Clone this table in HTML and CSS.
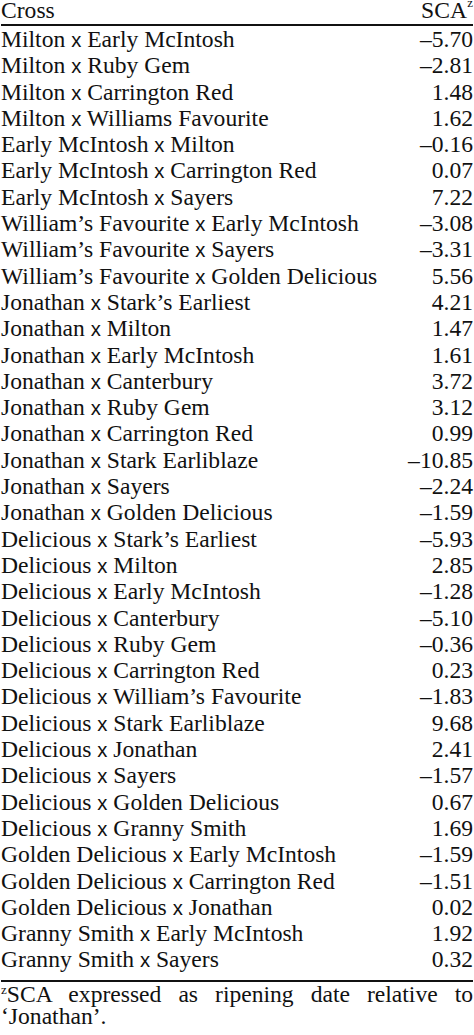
FILE: index.html
```html
<!DOCTYPE html>
<html>
<head>
<meta charset="utf-8">
<link rel="stylesheet" href="styles.css">
</head>
<body>
<div class="page">
  <div class="head">
    <span class="cross">Cross</span>
    <span class="sca">SCA<sup class="z">z</sup></span>
  </div>
  <div class="rows">
    <div class="row"><span>Milton <span class="x">x</span> Early McIntosh</span><span>–5.70</span></div>
    <div class="row"><span>Milton <span class="x">x</span> Ruby Gem</span><span>–2.81</span></div>
    <div class="row"><span>Milton <span class="x">x</span> Carrington Red</span><span>1.48</span></div>
    <div class="row"><span>Milton <span class="x">x</span> Williams Favourite</span><span>1.62</span></div>
    <div class="row"><span>Early McIntosh <span class="x">x</span> Milton</span><span>–0.16</span></div>
    <div class="row"><span>Early McIntosh <span class="x">x</span> Carrington Red</span><span>0.07</span></div>
    <div class="row"><span>Early McIntosh <span class="x">x</span> Sayers</span><span>7.22</span></div>
    <div class="row"><span>William’s Favourite <span class="x">x</span> Early McIntosh</span><span>–3.08</span></div>
    <div class="row"><span>William’s Favourite <span class="x">x</span> Sayers</span><span>–3.31</span></div>
    <div class="row"><span>William’s Favourite <span class="x">x</span> Golden Delicious</span><span>5.56</span></div>
    <div class="row"><span>Jonathan <span class="x">x</span> Stark’s Earliest</span><span>4.21</span></div>
    <div class="row"><span>Jonathan <span class="x">x</span> Milton</span><span>1.47</span></div>
    <div class="row"><span>Jonathan <span class="x">x</span> Early McIntosh</span><span>1.61</span></div>
    <div class="row"><span>Jonathan <span class="x">x</span> Canterbury</span><span>3.72</span></div>
    <div class="row"><span>Jonathan <span class="x">x</span> Ruby Gem</span><span>3.12</span></div>
    <div class="row"><span>Jonathan <span class="x">x</span> Carrington Red</span><span>0.99</span></div>
    <div class="row"><span>Jonathan <span class="x">x</span> Stark Earliblaze</span><span>–10.85</span></div>
    <div class="row"><span>Jonathan <span class="x">x</span> Sayers</span><span>–2.24</span></div>
    <div class="row"><span>Jonathan <span class="x">x</span> Golden Delicious</span><span>–1.59</span></div>
    <div class="row"><span>Delicious <span class="x">x</span> Stark’s Earliest</span><span>–5.93</span></div>
    <div class="row"><span>Delicious <span class="x">x</span> Milton</span><span>2.85</span></div>
    <div class="row"><span>Delicious <span class="x">x</span> Early McIntosh</span><span>–1.28</span></div>
    <div class="row"><span>Delicious <span class="x">x</span> Canterbury</span><span>–5.10</span></div>
    <div class="row"><span>Delicious <span class="x">x</span> Ruby Gem</span><span>–0.36</span></div>
    <div class="row"><span>Delicious <span class="x">x</span> Carrington Red</span><span>0.23</span></div>
    <div class="row"><span>Delicious <span class="x">x</span> William’s Favourite</span><span>–1.83</span></div>
    <div class="row"><span>Delicious <span class="x">x</span> Stark Earliblaze</span><span>9.68</span></div>
    <div class="row"><span>Delicious <span class="x">x</span> Jonathan</span><span>2.41</span></div>
    <div class="row"><span>Delicious <span class="x">x</span> Sayers</span><span>–1.57</span></div>
    <div class="row"><span>Delicious <span class="x">x</span> Golden Delicious</span><span>0.67</span></div>
    <div class="row"><span>Delicious <span class="x">x</span> Granny Smith</span><span>1.69</span></div>
    <div class="row"><span>Golden Delicious <span class="x">x</span> Early McIntosh</span><span>–1.59</span></div>
    <div class="row"><span>Golden Delicious <span class="x">x</span> Carrington Red</span><span>–1.51</span></div>
    <div class="row"><span>Golden Delicious <span class="x">x</span> Jonathan</span><span>0.02</span></div>
    <div class="row"><span>Granny Smith <span class="x">x</span> Early McIntosh</span><span>1.92</span></div>
    <div class="row"><span>Granny Smith <span class="x">x</span> Sayers</span><span>0.32</span></div>
  </div>
  <p class="note"><sup class="nz">z</sup>SCA expressed as ripening date relative to ‘Jonathan’.</p>
</div>
</body>
</html>
```

FILE: styles.css
```css
html, body {
  margin: 0;
  padding: 0;
  background: #ffffff;
}
.page {
  width: 473px;
  font-family: "Liberation Serif", "Times New Roman", serif;
  font-size: 23.6px;
  color: #111111;
  padding-left: 1px;
  box-sizing: border-box;
}
.head {
  display: flex;
  justify-content: space-between;
  line-height: 20px;
  height: 24px;
  border-bottom: 2px solid #111111;
  box-sizing: content-box;
}
.sca {
  position: relative;
  padding-right: 6px;
}
.z {
  position: absolute;
  right: 0;
  top: -4px;
  font-size: 13px;
  line-height: 13px;
}
.rows {
  padding-bottom: 7px;
  border-bottom: 2px solid #111111;
}
.row {
  display: flex;
  justify-content: space-between;
  line-height: 26.31px;
  height: 26.31px;
  white-space: nowrap;
}
.x {
  font-family: "Liberation Sans", Arial, sans-serif;
  font-size: 0.86em;
}
.note {
  margin: 0;
  line-height: 22px;
  text-align: justify;
  padding-top: 1px;
}
.nz {
  font-size: 13px;
  line-height: 0;
  vertical-align: 8px;
}
```
